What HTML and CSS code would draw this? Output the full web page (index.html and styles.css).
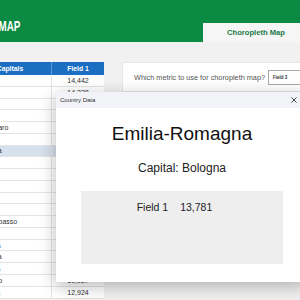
FILE: index.html
```html
<!DOCTYPE html>
<html lang="en">
<head>
    <meta charset="UTF-8">
    <meta name="viewport" content="width=device-width, initial-scale=1.0">
    <title>Italy Regions Map</title>
    <link rel="stylesheet" href="styles.css">
</head>
<body>
    <div class="app">
        <header class="topbar">
            <div class="brand"><span>ITALY REGIONS MAP</span></div>
            <nav class="tab">Choropleth Map</nav>
        </header>
        <main class="content">
            <div class="grid-table">
                <div class="grid-head">
                    <div>Capitals</div>
                    <div>Field 1</div>
                </div>
                <div class="grid-row"><div>Aosta</div><div>14,442</div></div>
                <div class="grid-row"><div>Torino</div><div>14,338</div></div>
                <div class="grid-row"><div>Milano</div><div>15,102</div></div>
                <div class="grid-row"><div>Trento</div><div>13,220</div></div>
                <div class="grid-row"><div>Catanzaro</div><div>11,874</div></div>
                <div class="grid-row"><div>Napoli</div><div>12,561</div></div>
                <div class="grid-row selected"><div>Bologna</div><div>13,781</div></div>
                <div class="grid-row"><div>Trieste</div><div>14,006</div></div>
                <div class="grid-row"><div>Roma</div><div>13,459</div></div>
                <div class="grid-row"><div>Ancona</div><div>12,873</div></div>
                <div class="grid-row"><div>Firenze</div><div>13,590</div></div>
                <div class="grid-row"><div>Bari</div><div>11,932</div></div>
                <div class="grid-row"><div>Campobasso</div><div>11,407</div></div>
                <div class="grid-row"><div>Cagliari</div><div>12,118</div></div>
                <div class="grid-row"><div>L'Aquila</div><div>12,654</div></div>
                <div class="grid-row"><div>Potenza</div><div>11,289</div></div>
                <div class="grid-row"><div>Genova</div><div>13,905</div></div>
                <div class="grid-row"><div>Palermo</div><div>10,927</div></div>
                <div class="grid-row"><div>Perugia</div><div>12,924</div></div>
            </div>
            <section class="panel">
                <label class="panel-label" for="metric">Which metric to use for choropleth map?</label>
                <div class="select" id="metric">Field 3</div>
            </section>
        </main>

        <div class="dialog">
            <div class="dialog-bar">
                <span>Country Data</span>
                <svg class="dialog-close" width="6" height="6" viewBox="0 0 6 6"><path d="M0.5 0.5 L5.5 5.5 M5.5 0.5 L0.5 5.5" stroke="#333" stroke-width="0.9" fill="none"/></svg>
            </div>
            <div class="dialog-body">
                <h1 class="region-name">Emilia-Romagna</h1>
                <p class="region-capital">Capital: Bologna</p>
                <div class="fields">
                    <span>Field 1</span>
                    <span>13,781</span>
                </div>
            </div>
        </div>
    </div>
</body>
</html>
```

FILE: styles.css
```css
body, html { margin: 0; padding: 0; width: 300px; height: 300px; overflow: hidden; font-family: "Liberation Sans", Arial, sans-serif; }
body { background: #f1f1f1; color: #333; }

/* page is wider than the window, its left edge scrolled out of view */
.app { position: relative; width: 340px; height: 300px; margin-left: -31px; background: #f1f1f1; }

.topbar { display: flex; align-items: flex-end; height: 42px; background: #0b8a44; }
.brand { align-self: center; width: 51px; display: flex; justify-content: flex-end; padding-top: 10px; white-space: nowrap; }
.brand span { color: #fff; font-weight: bold; font-size: 14px; line-height: 14px; transform: scaleX(0.7); transform-origin: right center; }
.tab {
    margin-left: auto; width: 106px; height: 19px; background: #f6f6f6; color: #217a47;
    font-size: 7.6px; font-weight: bold; display: flex; align-items: center; justify-content: center;
}

.content { display: flex; gap: 18px; padding-top: 20px; align-items: flex-start; }

.grid-table { width: 135px; background: #fff; flex: none; font-size: 7px; color: #333; }
.grid-head, .grid-row { display: grid; grid-template-columns: 82px 53px; }
.grid-head { height: 13px; background: #1b6ec2; color: #fff; font-weight: bold; font-size: 6.8px; }
.grid-head div { display: flex; align-items: center; justify-content: center; }
.grid-head div + div { border-left: 1px solid #5a97d6; }
.grid-row { height: 11.78px; box-sizing: border-box; border-bottom: 1px solid #e4e4e4; }
.grid-row div { display: flex; align-items: center; white-space: nowrap; overflow: hidden; }
.grid-row div:first-child { padding-left: 7px; }
.grid-row div + div { justify-content: center; border-left: 1px solid #e4e4e4; }
.grid-row.selected { background: #d7e0ed; }

.panel {
    flex: 1; height: 30px; background: #fff; border: 1px solid #e6e6e6; border-right: 0;
    display: flex; align-items: center; padding-left: 11px; box-sizing: border-box;
}
.panel-label { font-size: 7.3px; color: #555; white-space: nowrap; }
.select {
    margin-left: 3px; width: 50px; height: 15px; border: 1px solid #a9a9a9; box-sizing: border-box;
    font-size: 4.5px; font-weight: bold; color: #333; display: flex; align-items: center; padding-left: 4px;
}

.dialog {
    position: absolute; left: 87px; top: 92px; width: 252px; height: 190px; background: #fff;
    box-shadow: 0 4px 16px rgba(0, 0, 0, 0.28); display: flex; flex-direction: column;
}
.dialog-bar {
    height: 16px; background: #f1f3f6; display: flex; align-items: center; justify-content: space-between;
    padding: 0 11px 0 4px; font-size: 6px; color: #333; flex: none;
}
.dialog-close { display: block; }
.dialog-body { display: flex; flex-direction: column; align-items: center; padding: 0 25px; }
.region-name { margin: 15px 0 0; font-size: 19px; line-height: 22px; font-weight: normal; color: #111; }
.region-capital { margin: 16px 0 0; font-size: 12px; line-height: 14px; color: #222; }
.fields {
    align-self: stretch; margin-top: 15.5px; height: 73px; background: #eeeeee; box-sizing: border-box;
    display: flex; justify-content: center; gap: 12px; padding: 10px 15px 0 0; font-size: 10.5px; line-height: 12px; color: #222;
}
```
